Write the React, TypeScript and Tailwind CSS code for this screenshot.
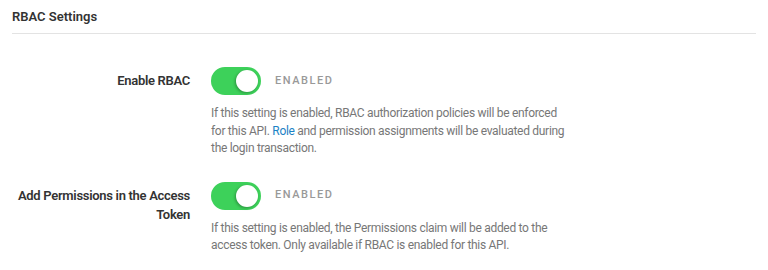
const Toggle = () => (
  <div className="flex h-[28px] w-[50px] shrink-0 items-center justify-end rounded-full bg-[#3dd15a] px-[3px]">
    <div className="h-[22px] w-[22px] rounded-full bg-white shadow-[-1px_1px_3px_rgba(0,0,0,0.3)]" />
  </div>
);

type RowProps = {
  label: string;
  children: React.ReactNode;
};

const SettingRow = ({ label, children }: RowProps) => (
  <div className="flex">
    <div className="w-[178px] shrink-0 pt-[4px] text-right text-[13px] leading-[19px] font-semibold tracking-[-0.3px] text-[#333]">
      {label}
    </div>
    <div className="ml-[21px] flex flex-col">
      <div className="flex items-center gap-[14px]">
        <Toggle />
        <span className="text-[11px] font-medium tracking-[0.14em] text-[#999]">ENABLED</span>
      </div>
      <p className="mt-[10px] max-w-[362px] text-[12px] leading-[17.5px] tracking-[-0.3px] text-[#777]">{children}</p>
    </div>
  </div>
);

export default function App() {
  return (
    <div className="h-[270px] w-[768px] bg-white px-[12px] pt-[8px] font-['Roboto',sans-serif]">
      <h2 className="border-b border-[#e3e3e3] pb-[7px] text-[13px] leading-[18px] font-semibold text-[#333]">
        RBAC Settings
      </h2>
      <div className="mr-[1px] flex flex-col gap-[24px] pt-[33px]">
        <SettingRow label="Enable RBAC">
          If this setting is enabled, RBAC authorization policies will be enforced for this API.{" "}
          <a className="text-[#1b82c5]">Role</a> and permission assignments will be evaluated during the login
          transaction.
        </SettingRow>
        <SettingRow label="Add Permissions in the Access Token">
          If this setting is enabled, the Permissions claim will be added to the access token. Only available if
          RBAC is enabled for this API.
        </SettingRow>
      </div>
    </div>
  );
}
